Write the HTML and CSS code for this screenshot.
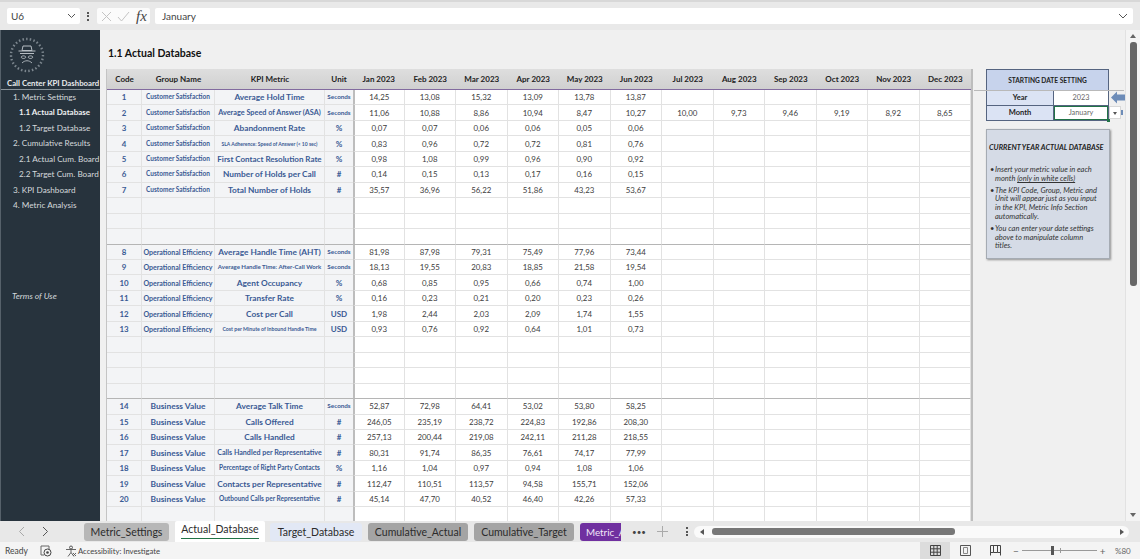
FILE: index.html
```html
<!DOCTYPE html>
<html lang="en">
<head>
<meta charset="utf-8">
<title>Actual Database</title>
<link rel="stylesheet" href="styles.css">
</head>
<body>
<div class="fbar">
  <div class="namebox"><span>U6</span><svg width="9" height="6" viewBox="0 0 9 6"><path d="M1 1l3.500 3.500L8 1" fill="none" stroke="#555" stroke-width="1"/></svg></div>
  <div class="kebab"><b></b><b></b><b></b></div>
  <div class="fxbox">
    <svg width="11" height="11" viewBox="0 0 11 11"><path d="M1 1l9 9M10 1l-9 9" stroke="#c4c4c4" stroke-width="1"/></svg>
    <svg width="13" height="11" viewBox="0 0 13 11"><path d="M1 6l3.500 4L12 1" fill="none" stroke="#c4c4c4" stroke-width="1"/></svg>
    <span class="fx">fx</span>
  </div>
  <div class="finput"><span>January</span><svg width="10" height="6" viewBox="0 0 10 6"><path d="M1 1l4 4 4-4" fill="none" stroke="#555" stroke-width="1"/></svg></div>
</div>
<div class="main">
  <nav class="side">
    <div class="logo">
      <svg width="36" height="36" viewBox="0 0 36 36">
        <circle cx="18" cy="18" r="16" fill="none" stroke="#7c868e" stroke-width="2.400" stroke-dasharray="1.500 2.200"/>
        <path d="M13 13.500l1-4.500h8l1 4.500zM9.500 14h17M11 16.500h14" fill="none" stroke="#b6bdc3" stroke-width="1"/>
        <path d="M12 20c2-2 4-1 5 0-1 2-4 2-5 0zM19 20c1-1 3-2 5 0-1 2-4 2-5 0zM13 26c3-3 7-3 10 0" fill="none" stroke="#b6bdc3" stroke-width=".9"/>
      </svg>
    </div>
    <div class="brand">Call Center KPI Dashboard</div>
    <div class="nav">1. Metric Settings</div>
    <div class="nav sub on">1.1 Actual Database</div>
    <div class="nav sub">1.2 Target Database</div>
    <div class="nav">2. Cumulative Results</div>
    <div class="nav sub">2.1 Actual Cum. Board</div>
    <div class="nav sub">2.2 Target Cum. Board</div>
    <div class="nav">3. KPI Dashboard</div>
    <div class="nav">4. Metric Analysis</div>
    <div class="terms">Terms of Use</div>
  </nav>
  <div class="sheet">
    <h1>1.1 Actual Database</h1>
    <div class="work">
      <table>
        <thead>
          <tr><th class="w1">Code</th><th class="w2">Group Name</th><th class="w3">KPI Metric</th><th class="w4">Unit</th><th>Jan 2023</th><th>Feb 2023</th><th>Mar 2023</th><th>Apr 2023</th><th>May 2023</th><th>Jun 2023</th><th>Jul 2023</th><th>Aug 2023</th><th>Sep 2023</th><th>Oct 2023</th><th>Nov 2023</th><th>Dec 2023</th></tr>
        </thead>
        <tbody>
          <tr><td class="k">1</td><td class="k g">Customer Satisfaction</td><td class="k m">Average Hold Time</td><td class="k u">Seconds</td><td>14,25</td><td>13,08</td><td>15,32</td><td>13,09</td><td>13,78</td><td>13,87</td><td></td><td></td><td></td><td></td><td></td><td></td></tr>
          <tr><td class="k">2</td><td class="k g">Customer Satisfaction</td><td class="k m2">Average Speed of Answer (ASA)</td><td class="k u">Seconds</td><td>11,06</td><td>10,88</td><td>8,86</td><td>10,94</td><td>8,47</td><td>10,27</td><td>10,00</td><td>9,73</td><td>9,46</td><td>9,19</td><td>8,92</td><td>8,65</td></tr>
          <tr><td class="k">3</td><td class="k g">Customer Satisfaction</td><td class="k m">Abandonment Rate</td><td class="k n">%</td><td>0,07</td><td>0,07</td><td>0,06</td><td>0,06</td><td>0,05</td><td>0,06</td><td></td><td></td><td></td><td></td><td></td><td></td></tr>
          <tr><td class="k">4</td><td class="k g">Customer Satisfaction</td><td class="k m4">SLA Adherence: Speed of Answer (&lt; 10 sec)</td><td class="k n">%</td><td>0,83</td><td>0,96</td><td>0,72</td><td>0,72</td><td>0,81</td><td>0,76</td><td></td><td></td><td></td><td></td><td></td><td></td></tr>
          <tr><td class="k">5</td><td class="k g">Customer Satisfaction</td><td class="k m5">First Contact Resolution Rate</td><td class="k n">%</td><td>0,98</td><td>1,08</td><td>0,99</td><td>0,96</td><td>0,90</td><td>0,92</td><td></td><td></td><td></td><td></td><td></td><td></td></tr>
          <tr><td class="k">6</td><td class="k g">Customer Satisfaction</td><td class="k m">Number of Holds per Call</td><td class="k n">#</td><td>0,14</td><td>0,15</td><td>0,13</td><td>0,17</td><td>0,16</td><td>0,15</td><td></td><td></td><td></td><td></td><td></td><td></td></tr>
          <tr><td class="k">7</td><td class="k g">Customer Satisfaction</td><td class="k m">Total Number of Holds</td><td class="k n">#</td><td>35,57</td><td>36,96</td><td>56,22</td><td>51,86</td><td>43,23</td><td>53,67</td><td></td><td></td><td></td><td></td><td></td><td></td></tr>
          <tr><td class="k"></td><td class="k"></td><td class="k"></td><td class="k"></td><td></td><td></td><td></td><td></td><td></td><td></td><td></td><td></td><td></td><td></td><td></td><td></td></tr>
          <tr><td class="k"></td><td class="k"></td><td class="k"></td><td class="k"></td><td></td><td></td><td></td><td></td><td></td><td></td><td></td><td></td><td></td><td></td><td></td><td></td></tr>
          <tr class="end"><td class="k"></td><td class="k"></td><td class="k"></td><td class="k"></td><td></td><td></td><td></td><td></td><td></td><td></td><td></td><td></td><td></td><td></td><td></td><td></td></tr>
          <tr><td class="k">8</td><td class="k o">Operational Efficiency</td><td class="k m">Average Handle Time (AHT)</td><td class="k u">Seconds</td><td>81,98</td><td>87,98</td><td>79,31</td><td>75,49</td><td>77,96</td><td>73,44</td><td></td><td></td><td></td><td></td><td></td><td></td></tr>
          <tr><td class="k">9</td><td class="k o">Operational Efficiency</td><td class="k m3">Average Handle Time: After-Call Work</td><td class="k u">Seconds</td><td>18,13</td><td>19,55</td><td>20,83</td><td>18,85</td><td>21,58</td><td>19,54</td><td></td><td></td><td></td><td></td><td></td><td></td></tr>
          <tr><td class="k">10</td><td class="k o">Operational Efficiency</td><td class="k m">Agent Occupancy</td><td class="k n">%</td><td>0,68</td><td>0,85</td><td>0,95</td><td>0,66</td><td>0,74</td><td>1,00</td><td></td><td></td><td></td><td></td><td></td><td></td></tr>
          <tr><td class="k">11</td><td class="k o">Operational Efficiency</td><td class="k m">Transfer Rate</td><td class="k n">%</td><td>0,16</td><td>0,23</td><td>0,21</td><td>0,20</td><td>0,23</td><td>0,26</td><td></td><td></td><td></td><td></td><td></td><td></td></tr>
          <tr><td class="k">12</td><td class="k o">Operational Efficiency</td><td class="k m">Cost per Call</td><td class="k n">USD</td><td>1,98</td><td>2,44</td><td>2,03</td><td>2,09</td><td>1,74</td><td>1,55</td><td></td><td></td><td></td><td></td><td></td><td></td></tr>
          <tr><td class="k">13</td><td class="k o">Operational Efficiency</td><td class="k m6">Cost per Minute of Inbound Handle Time</td><td class="k n">USD</td><td>0,93</td><td>0,76</td><td>0,92</td><td>0,64</td><td>1,01</td><td>0,73</td><td></td><td></td><td></td><td></td><td></td><td></td></tr>
          <tr><td class="k"></td><td class="k"></td><td class="k"></td><td class="k"></td><td></td><td></td><td></td><td></td><td></td><td></td><td></td><td></td><td></td><td></td><td></td><td></td></tr>
          <tr><td class="k"></td><td class="k"></td><td class="k"></td><td class="k"></td><td></td><td></td><td></td><td></td><td></td><td></td><td></td><td></td><td></td><td></td><td></td><td></td></tr>
          <tr><td class="k"></td><td class="k"></td><td class="k"></td><td class="k"></td><td></td><td></td><td></td><td></td><td></td><td></td><td></td><td></td><td></td><td></td><td></td><td></td></tr>
          <tr class="end"><td class="k"></td><td class="k"></td><td class="k"></td><td class="k"></td><td></td><td></td><td></td><td></td><td></td><td></td><td></td><td></td><td></td><td></td><td></td><td></td></tr>
          <tr><td class="k">14</td><td class="k b">Business Value</td><td class="k m">Average Talk Time</td><td class="k u">Seconds</td><td>52,87</td><td>72,98</td><td>64,41</td><td>53,02</td><td>53,80</td><td>58,25</td><td></td><td></td><td></td><td></td><td></td><td></td></tr>
          <tr><td class="k">15</td><td class="k b">Business Value</td><td class="k m">Calls Offered</td><td class="k n">#</td><td>246,05</td><td>235,19</td><td>238,72</td><td>224,83</td><td>192,86</td><td>208,30</td><td></td><td></td><td></td><td></td><td></td><td></td></tr>
          <tr><td class="k">16</td><td class="k b">Business Value</td><td class="k m">Calls Handled</td><td class="k n">#</td><td>257,13</td><td>200,44</td><td>219,08</td><td>242,11</td><td>211,28</td><td>218,55</td><td></td><td></td><td></td><td></td><td></td><td></td></tr>
          <tr><td class="k">17</td><td class="k b">Business Value</td><td class="k m7">Calls Handled per Representative</td><td class="k n">#</td><td>80,31</td><td>91,74</td><td>86,35</td><td>76,61</td><td>74,17</td><td>77,99</td><td></td><td></td><td></td><td></td><td></td><td></td></tr>
          <tr><td class="k">18</td><td class="k b">Business Value</td><td class="k m8">Percentage of Right Party Contacts</td><td class="k n">%</td><td>1,16</td><td>1,04</td><td>0,97</td><td>0,94</td><td>1,08</td><td>1,06</td><td></td><td></td><td></td><td></td><td></td><td></td></tr>
          <tr><td class="k">19</td><td class="k b">Business Value</td><td class="k m">Contacts per Representative</td><td class="k n">#</td><td>112,47</td><td>110,51</td><td>113,57</td><td>94,58</td><td>155,71</td><td>152,06</td><td></td><td></td><td></td><td></td><td></td><td></td></tr>
          <tr><td class="k">20</td><td class="k b">Business Value</td><td class="k m8">Outbound Calls per Representative</td><td class="k n">#</td><td>45,14</td><td>47,70</td><td>40,52</td><td>46,40</td><td>42,26</td><td>57,33</td><td></td><td></td><td></td><td></td><td></td><td></td></tr>
          <tr><td class="k"></td><td class="k"></td><td class="k"></td><td class="k"></td><td></td><td></td><td></td><td></td><td></td><td></td><td></td><td></td><td></td><td></td><td></td><td></td></tr>
        </tbody>
      </table>
      <aside class="panel">
        <div class="date">
          <div class="dhead">STARTING DATE SETTING</div>
          <div class="dlabel">Year</div><div class="dval">2023</div>
          <div class="dlabel">Month</div><div class="dval sel">January</div>
          <svg class="arrow" width="14" height="13" viewBox="0 0 14 13"><path d="M0 6.500L6 .5v3h8v6H6v3z" fill="#6d8cb8"/></svg>
          <div class="drop"></div>
        </div>
        <div class="note">
          <h2>CURRENT YEAR ACTUAL DATABASE</h2>
          <ul>
            <li>Insert your metric value in each month <u>(only in white cells)</u></li>
            <li>The KPI Code, Group, Metric and Unit will appear just as you input in the KPI, Metric Info Section automatically.</li>
            <li>You can enter your date settings above to manipulate column<br>titles.</li>
          </ul>
        </div>
      </aside>
    </div>
  </div>
  <div class="vscroll"><i class="up"></i><b></b><i class="down"></i></div>
</div>
<div class="tabs">
  <div class="tnav"><svg width="7" height="11" viewBox="0 0 7 11"><path d="M6 1L1.500 5.500 6 10" fill="none" stroke="#a8a8a8" stroke-width="1"/></svg><svg width="7" height="11" viewBox="0 0 7 11"><path d="M1 1l4.500 4.500L1 10" fill="none" stroke="#555" stroke-width="1"/></svg></div>
  <div class="tab t1">Metric_Settings</div>
  <div class="tab t2"><span>Actual_Database</span></div>
  <div class="tab t3">Target_Database</div>
  <div class="tab t4">Cumulative_Actual</div>
  <div class="tab t5">Cumulative_Target</div>
  <div class="tab t6">Metric_A</div>
  <div class="more">•••</div>
  <svg class="plus" width="11" height="11" viewBox="0 0 11 11"><path d="M5.500 0v11M0 5.500h11" stroke="#aaa" stroke-width="1"/></svg>
  <div class="kebab k2"><b></b><b></b><b></b></div>
  <div class="hscroll"><i class="l"></i><b></b><i class="r"></i></div>
</div>
<div class="status">
  <span class="ready">Ready</span>
  <svg class="mac" width="12" height="12" viewBox="0 0 12 12"><path d="M1 1h8v3M1 1v9h3" fill="none" stroke="#666"/><circle cx="7.500" cy="7.500" r="3.500" fill="none" stroke="#444"/><circle cx="7.500" cy="7.500" r="1.300" fill="#444"/></svg>
  <svg class="acc" width="12" height="12" viewBox="0 0 12 12"><circle cx="6" cy="2.500" r="1.500" fill="none" stroke="#555"/><path d="M1 4.500h10M6 4.500v3M6 7.500l-3 4M6 7.500l3 4M8 8l3 3M11 8l-3 3" fill="none" stroke="#555" stroke-width=".9"/></svg>
  <span class="acct">Accessibility: Investigate</span>
  <div class="views">
    <div class="view on"><svg width="11" height="11" viewBox="0 0 11 11"><path d="M.5.5h10v10H.5zM.5 3.800h10M.5 7.200h10M3.800.5v10M7.200.5v10" fill="none" stroke="#444"/></svg></div>
    <div class="view"><svg width="11" height="11" viewBox="0 0 11 11"><path d="M.5.5h10v10H.5z" fill="none" stroke="#555"/><path d="M3.500 2.500h4v6h-4z" fill="none" stroke="#888"/></svg></div>
    <div class="view"><svg width="11" height="11" viewBox="0 0 11 11"><path d="M.5 10.500V.5h10v10M.5 7.500h3v-7M10.500 7.500h-3v-7M3.500 7.500h4" fill="none" stroke="#444"/></svg></div>
  </div>
  <div class="zoomer"><span>−</span><div class="slider"><b></b></div><span>+</span></div>
  <span class="pct">%80</span>
</div>
</body>
</html>
```
FILE: styles.css
```css
* { box-sizing: border-box; }
html, body { margin: 0; padding: 0; }
body { width: 1140px; height: 559px; overflow: hidden; display: flex; flex-direction: column; background: #f0f0f0; font-family: Lato, "Liberation Sans", sans-serif; color: #333; }

.fbar { height: 30px; flex: none; display: flex; align-items: center; padding: 0 7px; background: #e9e9e9; border-top: 2px solid #d8d8d8; }
.namebox { width: 73px; height: 16px; background: #fff; border-radius: 2px; display: flex; align-items: center; justify-content: space-between; padding: 0 4px 0 4px; font-size: 10px; color: #444; }
.kebab { width: 3px; margin: 0 7px 0 7px; display: flex; flex-direction: column; gap: 1.500px; }
.kebab b { width: 2px; height: 2px; background: #555; display: block; }
.fxbox { width: 53px; height: 16px; background: #fbfbfb; border-radius: 2px; display: flex; align-items: center; gap: 5px; padding-left: 4px; }
.fx { font: italic 15px "Liberation Serif", serif; color: #444; margin-left: 1px; line-height: 16px; }
.finput { margin-left: 5px; flex: 1; height: 16px; background: #fff; border-radius: 2px; display: flex; align-items: center; justify-content: space-between; padding: 0 5px 0 7px; font-size: 10px; color: #444; }

.main { height: 491px; flex: none; display: flex; overflow: hidden; }
.side { width: 100px; flex: none; background: #27333d; border-left: 1px solid #56616a; color: #d5d9dc; font-size: 8.200px; }
.logo { height: 45px; padding: 7px 0 0 8px; }
.brand { height: 15px; line-height: 17px; font-weight: 700; font-size: 7.800px; color: #e8eaec; white-space: nowrap; padding-left: 6px; border-bottom: 1px solid #8a949b; }
.nav { height: 15.460px; line-height: 15.460px; padding-left: 12px; white-space: nowrap; }
.nav.sub { padding-left: 18px; }
.nav.on { font-weight: 700; font-size: 8px; color: #eef0f2; }
.terms { margin-top: 77px; padding-left: 11px; font-style: italic; font-size: 8.500px; }

.sheet { flex: 1; min-width: 0; padding-left: 6px; }
.sheet h1 { margin: 0; height: 39px; padding: 16px 0 0 2px; font-size: 10.500px; line-height: 14px; font-weight: 700; color: #111; }
.work { display: flex; align-items: flex-start; gap: 13px; }

table { width: 867px; table-layout: fixed; border-collapse: separate; border-spacing: 0; flex: none; background: #fff; border-right: 2px solid #bdbdbd; border-left: 1px solid #c4c4c4; }
th { height: 21px; padding: 0; font-size: 8px; font-weight: 700; color: #222; background: linear-gradient(#dedede, #d0d0d0); border-bottom: 1.500px solid #826b9f; text-align: center; }
.w1 { width: 35px; } .w2 { width: 73px; } .w3 { width: 110px; } .w4 { width: 28px; }
td { height: 15.460px; padding: 0; text-align: center; font-size: 7.900px; line-height: 10px; color: #3c3c3c; border-right: 1px solid #e2e2e2; border-bottom: 1px solid #e2e2e2; white-space: nowrap; overflow: hidden; }
td.k { background: #f3f4f6; color: #3a5a94; font-weight: 700; }
td.k:nth-child(4) + td { border-left: 2px solid #bdbdbd; }
td.k:nth-child(4) { border-right: 0; }
.g { font-size: 6.500px; }
.o { font-size: 7px; }
.b { font-size: 8.400px; }
.m { font-size: 8.300px; }
.m2 { font-size: 7.300px; }
.m3 { font-size: 6.100px; }
.m4 { font-size: 5px; }
.m5 { font-size: 8px; }
.m6 { font-size: 5.200px; }
.m7 { font-size: 7.100px; }
.m8 { font-size: 6.500px; }
.u { font-size: 6.300px; }
.n { font-size: 8px; }
tr.end td { border-bottom: 1.500px solid #b5b5b5; }

.panel { width: 123px; flex: none; }
.date { position: relative; display: grid; grid-template-columns: 67px 54px; grid-template-rows: 20px 15px 15px; border: 1px solid #556480; background: #556480; width: 123px; }
.date::after { content: ""; position: absolute; left: -13px; right: -16px; top: 19.500px; height: 1px; background: #b9b9b9; }
.dhead { grid-column: 1 / 3; background: #c7d3ec; font-size: 6.600px; font-weight: 700; color: #222; text-align: center; line-height: 20px; }
.dlabel { background: #dbe3f4; font-size: 7.500px; font-weight: 700; color: #222; text-align: center; line-height: 14px; border-top: 1px solid #556480; border-right: 1px solid #556480; }
.dval { background: #fff; font-size: 7.300px; color: #666; text-align: center; line-height: 14px; border-top: 1px solid #556480; }
.dval.sel { position: relative; box-shadow: inset 0 0 0 1px #217346; }
.dval.sel::after { content: ""; position: absolute; right: -2px; bottom: -2px; width: 3px; height: 3px; background: #217346; }
.arrow { position: absolute; left: 124px; top: 21px; }
.drop { position: absolute; left: 122px; top: 36px; width: 12px; height: 13px; background: #fff; border: 1px solid #d8d8d8; }
.drop::after { content: ""; position: absolute; left: 3px; top: 5px; border: 2.500px solid transparent; border-top: 3px solid #555; border-bottom: 0; }
.drop::before { content: ""; position: absolute; left: 11px; top: 3px; width: 2px; height: 5px; background: #6d8cb8; }
.note { margin-top: 8px; height: 130px; width: 124px; background: #d5dbe6; border: 1px solid #a5abb3; box-shadow: 1px 1px 2px #8e8e8e; padding: 13px 2px 0 2px; font-style: italic; font-size: 7.500px; line-height: 8.800px; color: #333; }
.note h2 { margin: 0 0 14px; font-size: 7.350px; line-height: 9px; font-weight: 700; color: #222; white-space: nowrap; }
.note ul { margin: 0; padding: 0 4px 0 6px; list-style: none; }
.note li { position: relative; margin-bottom: 3px; }
.note li::before { content: "•"; position: absolute; left: -5px; font-style: normal; }

.vscroll { width: 15px; flex: none; position: relative; background: #f4f4f4; border-left: 1px solid #e2e2e2; }
.vscroll b { position: absolute; left: 4px; top: 12px; width: 7px; height: 244px; border-radius: 3px; background: #666; }
.vscroll .up { position: absolute; left: 4px; top: 4px; border: 3.500px solid transparent; border-bottom: 4px solid #666; border-top: 0; }
.vscroll .down { position: absolute; left: 4px; bottom: 4px; border: 3.500px solid transparent; border-top: 4px solid #666; border-bottom: 0; }

.tabs { height: 21px; flex: none; display: flex; align-items: center; background: #e8e8e8; position: relative; font-size: 10.500px; }
.tnav { width: 84px; display: flex; gap: 17px; padding-left: 18px; flex: none; }
.tab { height: 18px; line-height: 18px; text-align: center; border-radius: 3px; color: #2b2b2b; flex: none; white-space: nowrap; overflow: hidden; margin-right: 6px; }
.t1 { width: 85px; background: #b7b7b7; }
.t2 { width: 90px; height: 21px; background: #fff; border-radius: 2px 2px 0 0; line-height: 17px; margin-right: 5px; }
.t2 span { display: inline-block; line-height: 15px; border-bottom: 1.500px solid #217346; padding: 0 0 1px; }
.t3 { width: 92px; background: #e2e8f5; }
.t4 { width: 100px; background: #a4a4a4; }
.t5 { width: 100px; background: #a4a4a4; }
.t6 { width: 41px; background: #7030a0; color: #f0e6f8; text-align: left; padding-left: 6px; margin: 0; border-radius: 3px 0 0 3px; font-size: 9.800px; }
.more { width: 36px; text-align: center; font-size: 8px; color: #444; flex: none; }
.plus { flex: none; }
.kebab.k2 { margin: 0 0 0 18px; }
.hscroll { position: relative; margin-left: 5px; width: 435px; height: 12px; border-radius: 6px; background: #fafafa; flex: none; }
.hscroll b { position: absolute; left: 18px; top: 2px; width: 243px; height: 7px; background: #777; border-radius: 3px; }
.hscroll .l { position: absolute; left: 6px; top: 3px; border: 3px solid transparent; border-right: 4px solid #555; border-left: 0; }
.hscroll .r { position: absolute; right: 5px; top: 3px; border: 3px solid transparent; border-left: 4px solid #555; border-right: 0; }

.status { height: 17px; flex: none; display: flex; align-items: center; background: #f4f4f4; font-size: 8.500px; color: #444; position: relative; }
.ready { margin-left: 5px; width: 35px; }
.acc { margin-left: 13px; }
.acct { margin-left: 1px; font-size: 7.700px; }
.views { margin-left: auto; display: flex; height: 17px; }
.view { width: 30px; display: flex; align-items: center; justify-content: center; }
.view.on { background: #dcdcdc; }
.zoomer { width: 95px; margin-left: 3px; display: flex; align-items: center; gap: 3px; color: #666; font-size: 10px; }
.slider { width: 75px; height: 1px; background: #999; position: relative; flex: none; }
.slider b { position: absolute; left: 29px; top: -4px; width: 3px; height: 9px; background: #555; }
.slider::after { content: ""; position: absolute; left: 38px; top: -2px; width: 1px; height: 5px; background: #999; }
.pct { width: 25px; margin-left: 7px; font-size: 8px; color: #666; }
```
